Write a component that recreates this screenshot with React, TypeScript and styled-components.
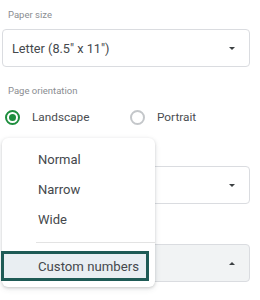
import React from "react";
import styled, { createGlobalStyle } from "styled-components";

const Global = createGlobalStyle`
  html, body { margin: 0; padding: 0; background: #ffffff; }
  body { font-family: Roboto, "Noto Sans", Arial, sans-serif; }
  * { box-sizing: border-box; }
`;

const Panel = styled.div`
  position: relative;
  width: 260px;
  height: 300px;
  padding: 8px 10px 0 2px;
  overflow: hidden;
`;

const Label = styled.div<{ $mt?: number }>`
  font-size: 9.5px;
  line-height: 14px;
  color: #8a8d91;
  padding-left: 6px;
  margin-top: ${(p) => p.$mt ?? 0}px;
`;

const Select = styled.div<{ $mt?: number; $muted?: boolean }>`
  display: flex;
  align-items: center;
  justify-content: space-between;
  height: 38px;
  margin-top: ${(p) => p.$mt ?? 0}px;
  padding: 0 14px 0 9px;
  border: 1px solid #dadce0;
  border-radius: 4px;
  background: ${(p) => (p.$muted ? "#f1f3f4" : "#ffffff")};
  font-size: 12.7px;
  color: #45484c;
`;

const Arrow = styled.span<{ $up?: boolean }>`
  width: 0;
  height: 0;
  border-left: 3.5px solid transparent;
  border-right: 3.5px solid transparent;
  ${(p) =>
    p.$up
      ? "border-bottom: 3.5px solid #3c4043;"
      : "border-top: 3.5px solid #3c4043;"}
`;

const RadioRow = styled.div`
  display: flex;
  align-items: center;
  height: 26px;
  margin-top: 6px;
  padding-left: 3px;
`;

const RadioOption = styled.label<{ $width?: number }>`
  display: flex;
  align-items: center;
  gap: 12px;
  width: ${(p) => p.$width ?? 0}px;
  font-size: 11.8px;
  color: #4a4d51;
`;

const RadioCircle = styled.span<{ $checked?: boolean }>`
  display: flex;
  align-items: center;
  justify-content: center;
  width: 15px;
  height: 15px;
  border-radius: 50%;
  border: 2px solid ${(p) => (p.$checked ? "#1e8e3e" : "#c4c7ca")};
  &::after {
    content: "";
    display: ${(p) => (p.$checked ? "block" : "none")};
    width: 7px;
    height: 7px;
    border-radius: 50%;
    background: #1e8e3e;
  }
`;

const Menu = styled.div`
  position: absolute;
  left: 2px;
  top: 138px;
  width: 153px;
  height: 149px;
  padding-top: 6px;
  background: #ffffff;
  border-radius: 6px;
  box-shadow: 0 1px 3px rgba(60, 64, 67, 0.22), 0 2px 6px rgba(60, 64, 67, 0.1);
  display: flex;
  flex-direction: column;
`;

const MenuItem = styled.div`
  height: 30px;
  display: flex;
  align-items: center;
  padding-left: 36px;
  font-size: 13px;
  color: #45484c;
`;

const Divider = styled.div`
  height: 1px;
  margin: 8px 0 8px 34px;
  background: #e3e3e3;
`;

const Highlighted = styled.div`
  height: 30px;
  width: 148px;
  margin-left: -1px;
  display: flex;
  align-items: center;
  padding-left: 34px;
  border: 3px solid #1e5a55;
  background: #e9eef2;
  font-size: 13.2px;
  color: #45484c;
`;

export default function App() {
  return (
    <>
      <Global />
      <Panel>
        <Label>Paper size</Label>
        <Select $mt={7}>
          <span>Letter (8.5" x 11")</span>
          <Arrow />
        </Select>
        <Label $mt={17}>Page orientation</Label>
        <RadioRow>
          <RadioOption $width={125}>
            <RadioCircle $checked />
            Landscape
          </RadioOption>
          <RadioOption $width={100}>
            <RadioCircle />
            Portrait
          </RadioOption>
        </RadioRow>
        <Label $mt={12}>Margins</Label>
        <Select $mt={10}>
          <span></span>
          <Arrow />
        </Select>
        <Label $mt={13}>Top</Label>
        <Select $mt={13} $muted>
          <span></span>
          <Arrow $up />
        </Select>
        <Menu>
          <MenuItem>Normal</MenuItem>
          <MenuItem>Narrow</MenuItem>
          <MenuItem>Wide</MenuItem>
          <Divider />
          <Highlighted>Custom numbers</Highlighted>
        </Menu>
      </Panel>
    </>
  );
}
